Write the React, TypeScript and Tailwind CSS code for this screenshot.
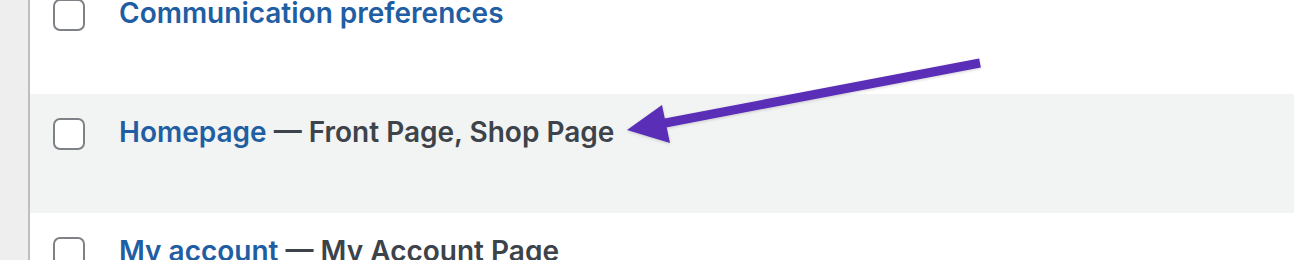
import React from "react";

function Checkbox() {
  return (
    <div className="w-[32px] h-[32px] shrink-0 rounded-[7px] border-2 border-[#7e8186] bg-white" />
  );
}

function Row({
  title,
  extra,
  striped,
}: {
  title: string;
  extra?: string;
  striped?: boolean;
}) {
  return (
    <div
      className={`h-[119px] shrink-0 flex items-start pl-[23px] pt-[24px] ${
        striped ? "bg-[#f2f3f3]" : "bg-white"
      }`}
    >
      <Checkbox />
      <div className="ml-[34px] mt-[-2px] text-[28px] leading-[32px] font-semibold whitespace-nowrap">
        <span className="text-[#1f5ea3]">{title}</span>
        {extra && <span className="text-[#3c434a]"> — {extra}</span>}
      </div>
    </div>
  );
}

export default function App() {
  return (
    <div
      className="relative w-[1294px] h-[260px] overflow-hidden bg-white flex"
      style={{ fontFamily: "Inter, 'Noto Sans', sans-serif" }}
    >
      <div className="w-[30px] shrink-0 bg-[#eeeeef] border-r-2 border-[#bdbec1]" />
      <div className="flex-1 flex flex-col mt-[-25px]">
        <Row title="Communication preferences" />
        <Row title="Homepage" extra="Front Page, Shop Page" striped />
        <Row title="My account" extra="My Account Page" />
      </div>
      <svg
        className="absolute inset-0 pointer-events-none"
        width="1294"
        height="260"
        viewBox="0 0 1294 260"
      >
        <defs>
          <filter id="sh" x="-10%" y="-50%" width="120%" height="200%">
            <feDropShadow dx="0" dy="1" stdDeviation="1.5" floodColor="#000" floodOpacity="0.18" />
          </filter>
        </defs>
        <g filter="url(#sh)" fill="#5a2db6" stroke="none">
          <line x1="980" y1="63" x2="660" y2="124" stroke="#5a2db6" strokeWidth="9" />
          <polygon points="627,130 662,105 670,143" />
        </g>
      </svg>
    </div>
  );
}
